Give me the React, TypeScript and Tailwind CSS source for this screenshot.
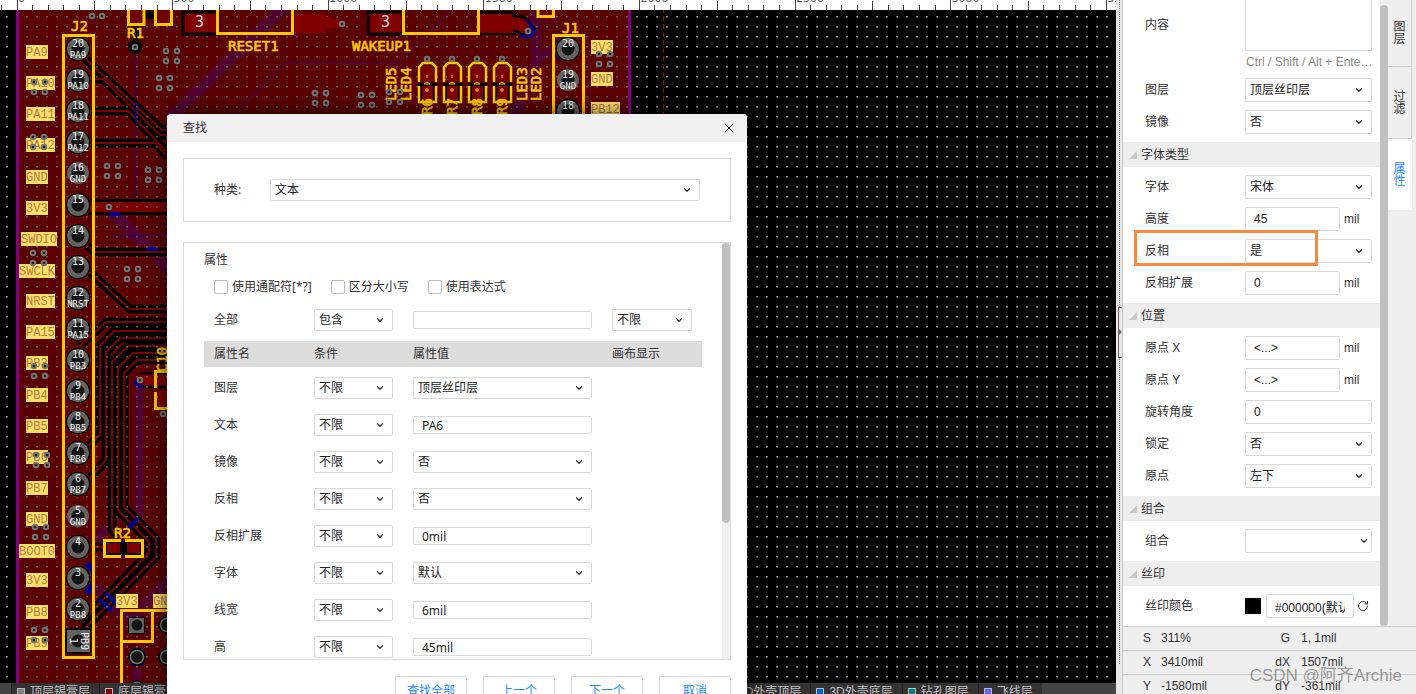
import React from 'react';
import { ChevronDown, RotateCw, X } from 'lucide-react';

const YELLOW = '#ffc800';
const COPPER = '#7d0000';

const j2Names = [
  'PA9', 'PA10', 'PA11', 'PA12', 'GND', '', '', '', 'NRST', 'PA15',
  'PB3', 'PB4', 'PB5', 'PB6', 'PB7', 'GND', '', '', 'PB8',
];

// [text, left, centre y]
const netLabels: [string, number, number][] = [
  ['PA9', 26, 52], ['PA10', 26, 83], ['PA11', 26, 114], ['PA12', 26, 145],
  ['GND', 26, 177], ['3V3', 26, 208], ['SWDIO', 21, 239], ['SWCLK', 19, 271],
  ['NRST', 26, 301], ['PA15', 26, 332], ['PB3', 26, 363], ['PB4', 26, 395],
  ['PB5', 26, 426], ['PB6', 26, 457], ['PB7', 26, 488], ['GND', 26, 519],
  ['BOOT0', 19, 551], ['3V3', 26, 580], ['PB8', 26, 612], ['PB9', 26, 643],
  ['3V3', 591, 47], ['GND', 591, 79], ['PB12', 591, 109],
  ['3V3', 116, 601], ['GND', 153, 601],
];

const viaQuads: [number, number][] = [
  [166, 51], [159, 78], [34, 82], [315, 93], [361, 95], [389, 92], [33, 137],
  [107, 166], [148, 170], [33, 253], [127, 269], [34, 366], [36, 455],
  [35, 527], [34, 630], [599, 54],
];

const singleVias: [number, number][] = [
  [92, 16], [102, 16], [135, 47], [342, 24], [528, 31], [109, 207], [140, 380],
  [163, 414], [427, 59], [452, 59], [477, 59], [502, 59],
];

const traces = [
  'M85 58 L95 68 L162 130 H170',
  'M88 79 H103 L160 135 H170',
  'M88 111 H128 L165 150 H170',
  'M88 143 H155 L165 154 H170',
  'M84 242 L94 252 H170',
  'M86 268 L94 276 L130 309 H170',
  'M80 346 L106 322 H170',
  'M86 448 L100 435 V346 L114 331 H170',
  'M86 483 L106 460 V352 L120 338 H170',
  'M122 540 L112 530 V362 L128 346 H170',
  'M80 623 L149 553 V542 L118 510 V368 L133 353 H170',
  'M84 629 L156 557 V539 L124 507 V373 L137 360 H170',
];

const leds = [
  { x: 427, name: 'R6' },
  { x: 452, name: 'R7' },
  { x: 477, name: 'R8' },
  { x: 502, name: 'R9' },
];

const Via = ({ x, y }: { x: number; y: number }) => (
  <circle cx={x} cy={y} r="2.3" fill="#222" stroke="#747474" strokeWidth="2" />
);

const Pad = ({ x, y, no, name }: { x: number; y: number; no: number; name?: string }) => (
  <g>
    {name !== 'GND' && (
      <circle cx={x} cy={y} r="13" fill="#000" stroke={COPPER} strokeWidth="1" />
    )}
    <circle cx={x} cy={y} r="8.7" fill="#141414" stroke="#636363" strokeWidth="4.4" />
    <text x={x} y={y - 2} textAnchor="middle" fontSize="10" fill="#f0f0f0">{no}</text>
    {name && (
      <text x={x} y={y + 9} textAnchor="middle" fontSize="9" fill="#f0f0f0">{name}</text>
    )}
  </g>
);

const Silk = ({ x, y, children }: { x: number; y: number; children: string }) => (
  <text x={x} y={y} fontSize="14" stroke={YELLOW} strokeWidth="0.6" fill={YELLOW}>
    {children}
  </text>
);

const SilkUp = ({ x, y, children }: { x: number; y: number; children: string }) => (
  <text
    transform={`translate(${x} ${y}) rotate(-90)`}
    fontSize="14"
    stroke={YELLOW}
    strokeWidth="0.6"
    fill={YELLOW}
  >
    {children}
  </text>
);

const Board = () => (
  <svg
    className="block h-full w-full bg-black font-['DejaVu_Sans_Mono',monospace]"
    aria-label="PCB"
  >
    <defs>
      <pattern id="grid" width="10" height="10" patternUnits="userSpaceOnUse">
        <rect x="6" y="6" width="2" height="1" fill="#808080" />
        <rect x="6" y="7" width="2" height="1" fill="#555" />
      </pattern>
    </defs>
    <g transform="translate(0 -10)">
      <rect x="17" y="0" width="612" height="700" fill="#5a0000" />

      {/* bottom copper seen through the pour */}
      <g fill="none" stroke="#520030">
        <path d="M285 6 L170 118" strokeWidth="12" />
        <path d="M232 117 L285 63 H398 L452 10" strokeWidth="2" />
        <path d="M112 212 L170 270" strokeWidth="13" />
        <path d="M139 385 V520" strokeWidth="9" />
        <path d="M536 10 V55 Q536 80 512 115 M532 75 Q535 50 565 50" strokeWidth="10" />
        <path d="M85 550 L125 510 M88 580 L130 620 L170 578" strokeWidth="10" />
      </g>
      <path d="M136 52 V204 M112 236 H170" stroke="#3a0048" strokeWidth="2" fill="none" />

      {/* top copper */}
      <g fill="none">
        {traces.map((d) => (
          <path key={d} d={d} stroke={COPPER} strokeWidth="11" />
        ))}
        {traces.map((d) => (
          <path key={d} d={d} stroke="#000" strokeWidth="9" />
        ))}
        {traces.map((d) => (
          <path key={d} d={d} stroke={COPPER} strokeWidth="2" />
        ))}
        <path d="M88 207 H170" stroke="#000" strokeWidth="16" />
        <path d="M88 207 H170" stroke={COPPER} strokeWidth="10" />
        <path d="M88 547 H110" stroke="#000" strokeWidth="9" />
        <path d="M88 547 H110" stroke={COPPER} strokeWidth="3" />
        <path d="M140 380 H170" stroke="#000" strokeWidth="16" />
        <path d="M140 380 H170" stroke={COPPER} strokeWidth="11" />
      </g>
      <g stroke="#00008c" fill="none">
        <path d="M109 214 H120 M147 249 H158 M126 530 L138 518" strokeWidth="4" />
        <path d="M99 599 L112 611 M105 593 L117 604" strokeWidth="4" />
        <path d="M135 380 Q135 387 143 386" strokeWidth="3" />
        <path d="M136 103 V124" strokeWidth="2" />
      </g>

      <rect x="0" y="10" width="17" height="700" fill="url(#grid)" />
      <rect x="17" y="10" width="612" height="700" fill="url(#grid)" opacity="0.6" />
      <rect x="629" y="10" width="100%" height="700" fill="url(#grid)" />

      {/* RESET1 */}
      <path d="M294 14 H326 V17 L343 20 V27 L326 29 V33 H294 Z" fill="#800000" />
      <rect x="183" y="12" width="35" height="22" fill="#800000" stroke="#000" strokeWidth="3" />
      <path d="M217.5 8 V33.5 H292.5 V8" fill="none" stroke={YELLOW} strokeWidth="3" />
      <text x="195" y="27" fontSize="15" fill="#d8d8d8">3</text>
      <Silk x={228} y={51}>RESET1</Silk>

      {/* WAKEUP1 */}
      <path d="M480 12.5 H514 V16 L524 17 L535 30" fill="none" stroke="#000" strokeWidth="3" />
      <path d="M480 33.5 H514 V30 L524 36" fill="none" stroke="#000" strokeWidth="3" />
      <path d="M480 14 H512 V17 L524 19 L532 30 L524 33 L513 29 V33 H480 Z" fill="#800000" />
      <path d="M527 20 L534 31 Q530 40 520 35" fill="none" stroke="#00008c" strokeWidth="3" />
      <rect x="368" y="12" width="35" height="22" fill="#800000" stroke="#000" strokeWidth="3" />
      <path d="M403.5 8 V33.5 H478.5 V8" fill="none" stroke={YELLOW} strokeWidth="3" />
      <text x="381" y="27" fontSize="15" fill="#d8d8d8">3</text>
      <Silk x={352} y={51}>WAKEUP1</Silk>

      {/* R1 */}
      <path d="M136 24 V45" stroke="#000" strokeWidth="6" />
      <path d="M145 15 H155" stroke="#000" strokeWidth="8" />
      <circle cx="135" cy="47" r="7" fill="#000" />
      <path d="M128.5 8 V24.5 H144 V8 M155.5 8 V24.5 H171.5 V8" fill="#700000" stroke={YELLOW} strokeWidth="3" />
      <Silk x={127} y={38}>R1</Silk>

      {/* LEDs and their resistors */}
      {leds.map(({ x, name }) => (
        <g key={name}>
          <path d={`M${x - 9} 83 H${x + 10} V101 H${x - 9} Z`} fill="#000" />
          <rect x={x - 5} y="66" width="11" height="15" fill={COPPER} />
          <rect x={x - 5} y="86" width="11" height="14" fill={COPPER} />
          <path
            d={`M${x - 8} 82 V67 L${x - 4} 63 H${x + 5} L${x + 9} 67 V82 M${x - 8} 86 V102 H${x + 9} V86`}
            fill="none"
            stroke={YELLOW}
            strokeWidth="2.5"
          />
          <path
            d={`M${x} 75 V78 M${x} 88 V92 M${x - 2} 90 H${x + 2} M${x - 3} 84 L${x} 82 L${x + 3} 84 Z`}
            fill="none"
            stroke={YELLOW}
          />
          <SilkUp x={x + 5} y={115}>{name}</SilkUp>
        </g>
      ))}
      <SilkUp x={396} y={101}>LED5</SilkUp>
      <SilkUp x={411} y={101}>LED4</SilkUp>
      <SilkUp x={527} y={101}>LED3</SilkUp>
      <SilkUp x={541} y={101}>LED2</SilkUp>

      {/* C10 */}
      <rect x="158" y="391" width="12" height="16" fill={COPPER} />
      <path d="M170 371.5 H155.5 V388 M155.5 392 V408.5 H170" fill="none" stroke={YELLOW} strokeWidth="3" />
      <SilkUp x={167} y={372}>C10</SilkUp>

      {/* R2 */}
      <rect x="104" y="541" width="39" height="14" fill="#000" />
      <rect x="107" y="543" width="13" height="10" fill={COPPER} />
      <rect x="127" y="543" width="13" height="10" fill={COPPER} />
      <path d="M121 540.5 H104.5 V556.5 H121 M125 540.5 H142.5 V556.5 H125" fill="none" stroke={YELLOW} strokeWidth="3" />
      <Silk x={114} y={538}>R2</Silk>

      {/* J2 */}
      <path d="M87 563 Q94 578 87 594" fill="none" stroke="#00008c" strokeWidth="7" />
      {j2Names.map((name, i) => (
        <Pad key={i} x={78} y={Math.round(49 + i * 31.1)} no={20 - i} name={name} />
      ))}
      <rect x="65" y="628" width="26" height="26" fill="#000" />
      <rect x="67" y="630" width="23" height="22" fill="#636363" />
      <circle cx="78" cy="641" r="6.5" fill="#141414" />
      <g fontSize="10" fill="#f0f0f0">
        <text transform="translate(70 638) rotate(90)">1</text>
        <text transform="translate(81 632) rotate(90)">PB9</text>
      </g>
      <rect x="63.5" y="35.5" width="30" height="622" fill="none" stroke={YELLOW} strokeWidth="3" />
      <Silk x={71} y={31}>J2</Silk>

      {/* J1 */}
      <path d="M538 8 V16.5 H553.5 V8" fill="#700000" stroke={YELLOW} strokeWidth="3" />
      <circle cx="566" cy="49" r="13" fill="#00008c" />
      <Pad x={568} y={49} no={20} />
      <Pad x={568} y={80} no={19} name="GND" />
      <Pad x={568} y={111} no={18} />
      <rect x="553.5" y="35.5" width="30" height="622" fill="none" stroke={YELLOW} strokeWidth="3" />
      <Silk x={562} y={33}>J1</Silk>

      {/* header in the lower left corner */}
      <path d="M137 668 V700" stroke="#520036" strokeWidth="9" />
      <rect x="128" y="617" width="17" height="17" fill="#000" />
      <rect x="131" y="648" width="12" height="18" fill="#00008c" />
      <rect x="129" y="618" width="15" height="15" fill="#636363" />
      <circle cx="137" cy="625" r="5.5" fill="#141414" />
      {[[137, 657], [167, 625], [167, 657], [137, 689]].map(([x, y]) => (
        <g key={`${x}-${y}`}>
          <circle cx={x} cy={y} r="9" fill="#000" />
          <circle cx={x} cy={y} r="6.5" fill="#141414" stroke="#747474" strokeWidth="1.5" />
        </g>
      ))}
      <path d="M170 610.5 H121.5 V700 M121.5 641.5 H152.5 V610.5" fill="none" stroke={YELLOW} strokeWidth="3" />

      {/* board outline */}
      <path d="M17.5 0 V700 M629.5 0 V700" stroke="#800080" strokeWidth="3" />
      <path d="M663.5 0 V700" stroke="#a00000" strokeDasharray="5 3" />

      <g className="font-['Liberation_Mono',monospace]" fontSize="12">
        {netLabels.map(([text, x, y]) => (
          <g key={`${x}-${y}`}>
            <rect x={x} y={y - 7} width={text.length * 7 + 1} height="14" fill="#ffe066" />
            <text x={x} y={y + 4} fill="#b37a4c">{text}</text>
          </g>
        ))}
      </g>
      {viaQuads.map(([x, y]) => (
        <g key={`${x}-${y}`}>
          <Via x={x} y={y} />
          <Via x={x + 11} y={y} />
          <Via x={x} y={y + 10} />
          <Via x={x + 11} y={y + 10} />
        </g>
      ))}
      {singleVias.map(([x, y]) => (
        <Via key={`${x}-${y}`} x={x} y={y} />
      ))}
    </g>
  </svg>
);

const Ruler = () => {
  const ticks = Array.from({ length: 72 }, (_, i) => i - 1);
  return (
    <svg className="block h-[10px] w-full shrink-0 bg-white font-['DejaVu_Sans',sans-serif]" aria-hidden="true">
      {ticks.map((n) => {
        const x = Math.floor(17 + n * 15.56);
        const top = n % 10 === 0 ? 0 : n % 5 === 0 ? 1 : 5;
        return <rect key={n} x={x} y={top} width="1" height={10 - top} fill="#444" />;
      })}
      {[0, 500, 1000, 1500, 2000, 2500, 3000, 3500].map((v) => (
        <text key={v} x={18 + v * 0.3112} y="2" fontSize="11" fill="#555">{v}</text>
      ))}
    </svg>
  );
};

type LayerTabProps = { color: string; name: string };

const LayerTab = ({ color, name }: LayerTabProps) => (
  <button className="flex shrink-0 items-center gap-[5px] border-l border-[#222] bg-[#333] pl-[5px] pr-[9px] text-[#c4c4c4]">
    <span className="h-2 w-2 border border-[#bbb]" style={{ backgroundColor: color }} />
    {name}
  </button>
);

const LayerBar = () => (
  <div className="h-[11px] shrink-0 overflow-hidden bg-[#444] pl-[11px]">
    <div className="flex h-[18px] text-xs leading-4">
      <LayerTab color="#808080" name="顶层锡膏层" />
      <LayerTab color="#800000" name="底层锡膏层" />
      <div className="w-[532px] shrink-0 bg-[#333]" />
      <LayerTab color="#3333ff" name="3D外壳顶层" />
      <LayerTab color="#0066cc" name="3D外壳底层" />
      <LayerTab color="#008080" name="钻孔图层" />
      <LayerTab color="#6464ff" name="飞线层" />
    </div>
  </div>
);

type SelectProps = { label: string; value: string; className: string; tight?: boolean };

const Select = ({ label, value, className, tight }: SelectProps) => (
  <div className={`relative ${className}`}>
    <select
      aria-label={label}
      className="h-full w-full appearance-none rounded-xs border border-[#d9d9d9] bg-white pl-1 text-[#222] outline-none"
    >
      <option>{value}</option>
    </select>
    <ChevronDown
      className={`pointer-events-none absolute top-1/2 h-[10px] w-[10px] -translate-y-1/2 text-[#333] ${tight ? 'right-[3px]' : 'right-2'}`}
      strokeWidth={3}
    />
  </div>
);

type FieldProps = { label: string; value?: string; className: string };

const Field = ({ label, value, className }: FieldProps) => (
  <input
    aria-label={label}
    defaultValue={value}
    className={`rounded-xs border border-[#d9d9d9] bg-white px-2 text-[#222] outline-none ${className}`}
  />
);

const findRows = [
  { name: '图层', value: '顶层丝印层', select: true },
  { name: '文本', value: 'PA6' },
  { name: '镜像', value: '否', select: true },
  { name: '反相', value: '否', select: true },
  { name: '反相扩展', value: '0mil' },
  { name: '字体', value: '默认', select: true },
  { name: '线宽', value: '6mil' },
  { name: '高', value: '45mil' },
];

const FindDialog = () => (
  <div
    role="dialog"
    aria-label="查找"
    className="absolute left-[167px] top-[114px] w-[580px] rounded-t bg-white pb-4 font-['Noto_Sans','Noto_Sans_CJK_SC',sans-serif] text-xs text-[#333] shadow-[0_0_20px_rgba(0,0,0,0.7)]"
  >
    <div className="flex h-7 items-center justify-between rounded-t bg-[#f0f0f0] pl-4 pr-[10px]">
      <h2>查找</h2>
      <button aria-label="关闭">
        <X className="h-4 w-4 text-[#222]" strokeWidth={1.5} />
      </button>
    </div>

    <div className="mx-4 mt-4 flex h-16 items-center border border-[#dcdcdc] pl-[30px]">
      <span className="w-14">种类:</span>
      <Select label="种类" value="文本" className="h-[22px] w-[430px]" />
    </div>

    <div className="mx-4 mt-5 flex h-[418px] overflow-hidden border border-[#dcdcdc]">
      <div className="flex-1 overflow-hidden pl-5">
        <h3 className="mt-[9px] leading-4">属性</h3>
        <div className="mt-[11px] flex h-4 items-center gap-[19px] pl-[10px]">
          {['使用通配符[*?]', '区分大小写', '使用表达式'].map((text) => (
            <label key={text} className="flex items-center gap-1">
              <input
                type="checkbox"
                className="h-[14px] w-[14px] appearance-none rounded-xs border border-[#bbb] bg-white"
              />
              {text}
            </label>
          ))}
        </div>
        <div className="mt-[14px] flex h-[22px] items-center pl-[10px]">
          <span className="w-[100px]">全部</span>
          <Select label="全部条件" value="包含" className="mr-5 h-[22px] w-[79px]" />
          <Field label="全部" className="mr-5 h-[18px] w-[179px]" />
          <Select label="画布显示" value="不限" className="h-[22px] w-20" />
        </div>
        <table className="mt-[10px] w-[498px] table-fixed border-collapse">
          <colgroup>
            <col className="w-[110px]" />
            <col className="w-[99px]" />
            <col className="w-[199px]" />
            <col className="w-[90px]" />
          </colgroup>
          <thead>
            <tr className="h-[26px] bg-[#dcdcdc] text-left">
              <th className="pl-[10px] font-normal">属性名</th>
              <th className="font-normal">条件</th>
              <th className="font-normal">属性值</th>
              <th className="font-normal">画布显示</th>
            </tr>
          </thead>
          <tbody>
            {findRows.map((row) => (
              <tr key={row.name} className="h-[37px]">
                <td className="pl-[10px] pt-[5px]">{row.name}</td>
                <td className="pt-[5px]">
                  <Select label={`${row.name}条件`} value="不限" className="h-[22px] w-[79px]" />
                </td>
                <td className="pt-[5px]">
                  {row.select ? (
                    <Select label={row.name} value={row.value} className="h-[22px] w-[179px]" />
                  ) : (
                    <Field label={row.name} value={row.value} className="block h-[18px] w-[179px]" />
                  )}
                </td>
                <td />
              </tr>
            ))}
          </tbody>
        </table>
      </div>
      <div className="w-2 bg-[#f0f0f0]">
        <div className="h-[280px] rounded-full bg-[#c0c0c0]" />
      </div>
    </div>

    <div className="mx-4 mt-4 flex justify-end gap-4">
      {['查找全部', '上一个', '下一个', '取消'].map((text) => (
        <button
          key={text}
          className="h-[30px] w-[72px] rounded-xs border border-[#d9d9d9] text-[#1e88ff]"
        >
          {text}
        </button>
      ))}
    </div>
  </div>
);

type RowProps = { label: string; children: React.ReactNode };

const Row = ({ label, children }: RowProps) => (
  <div className="flex h-8 items-center pl-[22px] pr-2">
    <span className="w-[100px] shrink-0">{label}</span>
    {children}
  </div>
);

const Mil = ({ label, value }: { label: string; value: string }) => (
  <Row label={label}>
    <Field label={label} value={value} className="h-6 w-[95px]" />
    <span className="ml-1">mil</span>
  </Row>
);

const Choice = ({ label, value, tight }: { label: string; value: string; tight?: boolean }) => (
  <Row label={label}>
    <Select label={label} value={value} className="h-6 w-full" tight={tight} />
  </Row>
);

const Section = ({ title, children }: { title: string; children: React.ReactNode }) => (
  <section>
    <h3 className="flex h-[25px] items-center gap-1 bg-[#eee] pl-[6px]">
      <svg className="h-2 w-2" viewBox="0 0 8 8" aria-hidden="true">
        <path d="M8 0V8H0Z" fill="#c8c8c8" />
      </svg>
      {title}
    </h3>
    <div className="py-1">{children}</div>
  </section>
);

const PropertyPanel = () => (
  <div className="min-h-0 flex-1 overflow-hidden bg-white">
    <div className="flex h-[51px] pl-[22px] pr-2">
      <span className="w-[100px] shrink-0 pt-[17px]">内容</span>
      <textarea
        aria-label="内容"
        className="h-full w-full resize-none rounded-b-xs border border-t-0 border-[#d9d9d9] outline-none"
      />
    </div>
    <p className="h-[23px] truncate pl-[123px] text-xs leading-[23px] text-[#8c8c8c]">
      Ctrl / Shift / Alt + Ente…
    </p>
    <div className="pb-1">
      <Choice label="图层" value="顶层丝印层" />
      <Choice label="镜像" value="否" />
    </div>
    <Section title="字体类型">
      <Choice label="字体" value="宋体" />
      <Mil label="高度" value="45" />
      <div className="relative">
        <Choice label="反相" value="是" />
        <div className="pointer-events-none absolute -top-[5px] left-[11px] h-9 w-[184px] border-3 border-[#f58b3c]" />
      </div>
      <Mil label="反相扩展" value="0" />
    </Section>
    <Section title="位置">
      <Mil label="原点 X" value="<...>" />
      <Mil label="原点 Y" value="<...>" />
      <Row label="旋转角度">
        <Field label="旋转角度" value="0" className="h-6 w-full" />
      </Row>
      <Choice label="锁定" value="否" />
      <Choice label="原点" value="左下" />
    </Section>
    <Section title="组合">
      <Choice label="组合" value="" tight />
    </Section>
    <Section title="丝印">
      <Row label="丝印颜色">
        <span className="h-4 w-4 shrink-0 bg-black" />
        <Field label="丝印颜色" value="#000000(默认)" className="ml-[5px] h-6 w-[88px]" />
        <button aria-label="重置" className="ml-[3px]">
          <RotateCw className="h-3 w-3 text-[#333]" strokeWidth={2} />
        </button>
      </Row>
    </Section>
  </div>
);

const sideTabs = ['图层', '过滤', '属性'];

const SideTabs = () => (
  <div className="w-7 shrink-0 bg-[#efefef]">
    <div className="w-6">
      {sideTabs.map((tab, i) => (
        <button
          key={tab}
          className={
            i === 2
              ? 'flex h-[71px] w-full items-center justify-center border-r border-white bg-white text-[#1e88ff]'
              : `flex w-full items-center justify-center border-b border-r border-[#d0d0d0] ${i === 0 ? 'h-[67px]' : 'h-[72px]'}`
          }
        >
          <span className="w-3 break-all text-xs leading-3">{tab}</span>
        </button>
      ))}
    </div>
  </div>
);

const status = [
  ['S', '311%', 'G', '1, 1mil'],
  ['X', '3410mil', 'dX', '1507mil'],
  ['Y', '-1580mil', 'dY', '-361mil'],
];

const StatusPanel = () => (
  <div className="h-[68px] shrink-0 overflow-hidden bg-[#efefef]">
    {status.map(([a, av, b, bv]) => (
      <div key={a} className="flex h-6 items-center border-t border-[#cfcfcf] pb-px pl-5">
        <span className="w-[18px]">{a}</span>
        <span className="w-24">{av}</span>
        <span className="w-[33px] text-right">{b}</span>
        <span className="pl-[11px]">{bv}</span>
      </div>
    ))}
  </div>
);

const Splitter = () => (
  <div className="flex w-[7px] shrink-0 flex-col justify-center border-r border-[#c8c8c8] bg-[#e8e8e8]">
    <div className="ml-[3px] w-0 flex-1 border-l border-dotted border-[#888]" />
    <div className="ml-[2px] flex h-[51px] w-1 items-center border-y border-l border-[#766]">
      <svg className="h-2 w-1" viewBox="0 0 4 8" aria-hidden="true">
        <path d="M0 0L4 4L0 8Z" fill="#766" />
      </svg>
    </div>
    <div className="ml-[3px] mb-[30px] w-0 flex-1 border-l border-dotted border-[#888]" />
  </div>
);

export default function App() {
  return (
    <div className="relative flex h-screen overflow-hidden bg-white font-['Liberation_Sans','Noto_Sans_CJK_SC',sans-serif] text-xs text-[#333]">
      <main className="flex min-w-0 flex-1 flex-col">
        <Ruler />
        <div className="min-h-0 flex-1">
          <Board />
        </div>
        <LayerBar />
      </main>
      <Splitter />
      <aside className="flex w-[293px] shrink-0 flex-col">
        <div className="flex min-h-0 flex-1">
          <PropertyPanel />
          <div className="w-2 shrink-0 bg-[#f0f0f0] pt-[5px]">
            <div className="h-full rounded-full bg-[#c0c0c0]" />
          </div>
          <SideTabs />
        </div>
        <StatusPanel />
      </aside>
      <FindDialog />
      <div className="pointer-events-none absolute bottom-1 right-[14px] text-[17px] leading-7 text-[#808080]/80">
        CSDN @阿齐Archie
      </div>
    </div>
  );
}
